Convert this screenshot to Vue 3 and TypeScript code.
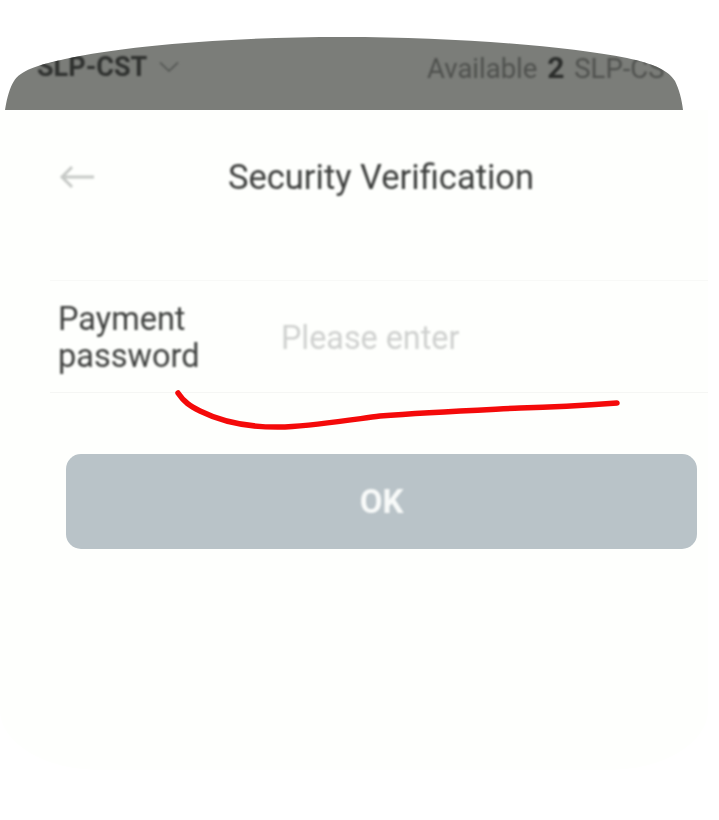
<script setup lang="ts">
const annotation = 'M178 393 C184 402 190 406 200 411 C222 422 250 428 285 427 C320 425 350 420 380 416 C430 412 480 410 520 408 C560 407 590 405 617 403'
</script>

<template>
  <div class="page">
    <header class="top">
      <div class="coin">
        <span>SLP-CST</span>
        <svg class="chevron" width="20" height="12" viewBox="0 0 20 12" fill="none">
          <path d="M1 1.5 L10 10 L19 1.5" stroke="#4f524f" stroke-width="1.6" />
        </svg>
      </div>
      <div class="avail">Available <b>2</b> SLP-CST</div>
    </header>
    <main class="sheet">
      <div class="nav">
        <svg class="back" width="38" height="28" viewBox="0 0 38 28" fill="none">
          <path d="M36 14 H4 M14 4 L4 14 L14 24" stroke="#c6c9c6" stroke-width="3" />
        </svg>
        <h1>Security Verification</h1>
      </div>
      <div class="row">
        <label>Payment<br />password</label>
        <span class="placeholder">Please enter</span>
      </div>
      <button class="ok" type="button"><span>OK</span></button>
    </main>
    <svg class="scribble" width="719" height="820" viewBox="0 0 719 820" fill="none">
      <path :d="annotation" stroke="#f40a0a" stroke-width="5.5" stroke-linecap="round" />
    </svg>
  </div>
</template>

<style>
html, body { margin: 0; background: #fff; }
</style>

<style scoped>
.page {
  position: relative;
  width: 719px;
  height: 820px;
  padding-top: 37px;
  box-sizing: border-box;
  overflow: hidden;
  background: #fff;
  font-family: Roboto, "Liberation Sans", sans-serif;
}
.top {
  display: flex;
  justify-content: space-between;
  align-items: center;
  box-sizing: border-box;
  width: 678px;
  height: 73px;
  margin-left: 5px;
  padding: 0 18px 13px 32px;
  background: #7b7d79;
  clip-path: path('M0 73 C2 60 5 50 9 44 C15 34 32 28 60 22 C120 9 220 0 338 0 C450 0 560 9 622 21 C650 27 664 34 670 44 C674 52 677 63 678 73 Z');
  white-space: nowrap;
}
.coin {
  display: flex;
  align-items: center;
  gap: 12px;
  font-size: 27px;
  font-weight: 700;
  color: #2f312f;
  filter: blur(1px);
}
.avail {
  width: 238px;
  overflow: hidden;
  font-size: 27.5px;
  color: #4f514e;
  filter: blur(1px);
}
.avail b { margin: 0 3px; font-size: 30px; color: #2b2d2b; }
.sheet {
  width: 708px;
  height: 660px;
  background: #feffFd;
  border-radius: 0 0 100px 100px / 0 0 60px 60px;
}
.nav {
  display: flex;
  align-items: center;
  height: 134px;
  padding-left: 58px;
  box-sizing: border-box;
}
.back { filter: blur(0.8px); }
h1 {
  margin: 0 0 0 132px;
  font-size: 34.5px;
  font-weight: 400;
  color: #3c3e3c;
  white-space: nowrap;
  filter: blur(1px);
}
.row {
  display: flex;
  align-items: center;
  box-sizing: border-box;
  height: 113px;
  margin: 36px 0 0 50px;
  padding-left: 8px;
  border-top: 1px solid #f8f9f7;
  border-bottom: 1px solid #f5f6f4;
}
label {
  width: 223px;
  margin-top: 3px;
  font-size: 32.5px;
  line-height: 37px;
  color: #3e403e;
  filter: blur(1px);
}
.placeholder {
  margin-top: 3px;
  font-size: 32.3px;
  color: #cfd1cf;
  filter: blur(1px);
}
.ok {
  display: block;
  width: 631px;
  height: 95px;
  margin: 61px 0 0 66px;
  padding: 0;
  border: 0;
  border-radius: 15px;
  background: #b9c3c8;
  color: #f8faf9;
  font: 700 33px Roboto, "Liberation Sans", sans-serif;
}
.ok span { display: inline-block; filter: blur(0.9px); }
.scribble {
  position: absolute;
  top: 0;
  left: 0;
  pointer-events: none;
}
</style>
